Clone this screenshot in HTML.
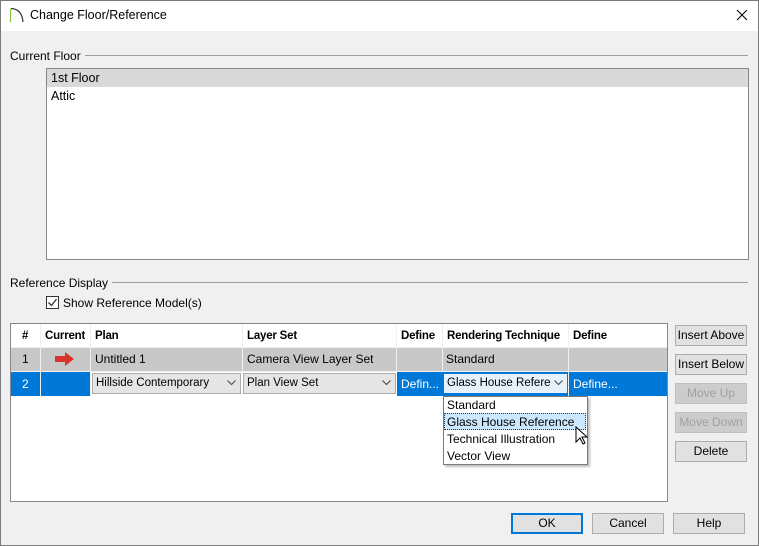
<!DOCTYPE html>
<html><head><style>
*{box-sizing:border-box;margin:0;padding:0}
body{width:759px;height:546px;position:relative;font-family:"Liberation Sans",sans-serif;font-size:12px;color:#000;background:#f0f0f0;overflow:hidden}
.a{position:absolute}
.win{left:0;top:0;width:759px;height:546px;border:1px solid #7a7a7a;background:#f0f0f0}
.title{left:1px;top:1px;width:757px;height:30px;background:#fff}
.btn{position:absolute;width:72px;height:21px;background:#e1e1e1;border:1px solid #adadad;text-align:center;line-height:19px;font-size:12px}
.dis{color:#a0a0a0;background:#cccccc;border-color:#bfbfbf}
.cell{position:absolute;height:24px;line-height:24px;padding-left:5px;white-space:nowrap;overflow:hidden}
.hd{font-weight:bold;font-size:11.5px;letter-spacing:-0.2px}
.vl{position:absolute;width:1px;background:#f0f0f0}
.combo{position:absolute;height:21px;background:#e5e5e5;border:1px solid #adadad;line-height:19px;padding-left:3px;font-size:11.5px;white-space:nowrap;overflow:hidden}
.combo span{display:block;overflow:hidden;white-space:nowrap}
.combo svg{position:absolute;right:4px;top:6px}
</style></head><body>
<div class="a win"></div>
<div class="a title"></div>
<svg class="a" style="left:9px;top:7px" width="16" height="16"><path d="M1.5 15V1.5" stroke="#8dc63f" stroke-width="1.2" fill="none"/><path d="M2 1.5Q13 2 14 15" stroke="#333" stroke-width="1.2" fill="none"/></svg>
<div class="a" style="left:30px;top:8px;font-size:12.5px">Change Floor/Reference</div>
<svg class="a" style="left:736px;top:9px" width="12" height="12"><path d="M1 1L11 11M11 1L1 11" stroke="#000" stroke-width="1.1"/></svg>

<div class="a" style="left:10px;top:49px">Current Floor</div>
<div class="a" style="left:85px;top:55px;width:663px;height:1px;background:#a0a0a0"></div>
<div class="a" style="left:46px;top:68px;width:703px;height:192px;background:#fff;border:1px solid #828790"></div>
<div class="a" style="left:47px;top:69px;width:701px;height:18px;background:#d9d9d9"></div>
<div class="a" style="left:51px;top:71px;font-size:12.5px">1st Floor</div>
<div class="a" style="left:51px;top:89px;font-size:12.5px">Attic</div>

<div class="a" style="left:10px;top:276px">Reference Display</div>
<div class="a" style="left:112px;top:282px;width:636px;height:1px;background:#a0a0a0"></div>
<div class="a" style="left:46px;top:296px;width:13px;height:13px;background:#fff;border:1px solid #333"></div>
<svg class="a" style="left:47px;top:297px" width="11" height="11"><path d="M1.5 5.5L4.5 8.5L9.5 2" stroke="#333" stroke-width="1.3" fill="none"/></svg>
<div class="a" style="left:63px;top:296px">Show Reference Model(s)</div>

<div class="a" style="left:10px;top:323px;width:658px;height:179px;background:#fff;border:1px solid #828790"></div>
<div class="cell hd" style="left:17px;top:324px">#</div>
<div class="cell hd" style="left:40px;top:324px">Current</div>
<div class="cell hd" style="left:90px;top:324px">Plan</div>
<div class="cell hd" style="left:242px;top:324px">Layer Set</div>
<div class="cell hd" style="left:396px;top:324px">Define</div>
<div class="cell hd" style="left:442px;top:324px;width:126px">Rendering Technique</div>
<div class="cell hd" style="left:568px;top:324px">Define</div>
<div class="a" style="left:11px;top:347px;width:656px;height:24px;background:#c8c8c8"></div>
<div class="cell" style="left:17px;top:347px">1</div>
<svg class="a" style="left:55px;top:352px" width="20" height="14"><path d="M0 4H10V0L19 7L10 14V10H0Z" fill="#d9342b"/></svg>
<div class="cell" style="left:90px;top:347px">Untitled 1</div>
<div class="cell" style="left:242px;top:347px">Camera View Layer Set</div>
<div class="cell" style="left:441px;top:347px">Standard</div>
<div class="a" style="left:11px;top:371px;width:656px;height:25px;background:#0078d7"></div>
<div class="cell" style="left:17px;top:372px;color:#fff">2</div>
<div class="a" style="left:91px;top:371px;width:306px;height:25px;background:#fff"></div>
<div class="combo" style="left:92px;top:373px;width:149px"><span>Hillside Contemporary</span><svg width="9" height="6"><path d="M0.5 0.5L4.5 4.5L8.5 0.5" stroke="#444" fill="none"/></svg></div>
<div class="combo" style="left:243px;top:373px;width:153px"><span>Plan View Set</span><svg width="9" height="6"><path d="M0.5 0.5L4.5 4.5L8.5 0.5" stroke="#444" fill="none"/></svg></div>
<div class="cell" style="left:396px;top:372px;color:#fff">Defin...</div>
<div class="combo" style="left:443px;top:373px;width:125px;background:#e5f1fb;border-color:#0078d7"><span style="width:103px">Glass House Reference</span><svg width="9" height="6"><path d="M0.5 0.5L4.5 4.5L8.5 0.5" stroke="#444" fill="none"/></svg></div>
<div class="cell" style="left:568px;top:372px;color:#fff">Define...</div>
<div class="vl" style="left:40px;top:324px;height:72px"></div>
<div class="vl" style="left:90px;top:324px;height:72px"></div>
<div class="vl" style="left:242px;top:324px;height:47px"></div>
<div class="vl" style="left:396px;top:324px;height:47px"></div>
<div class="vl" style="left:442px;top:324px;height:47px"></div>
<div class="vl" style="left:568px;top:324px;height:72px"></div>
<div class="a" style="left:11px;top:347px;width:656px;height:1px;background:#f0f0f0"></div>
<div class="a" style="left:11px;top:371px;width:656px;height:1px;background:#f0f0f0"></div>
<div class="a" style="left:443px;top:396px;width:145px;height:69px;background:#fff;border:1px solid #7a7a7a;box-shadow:2px 2px 2px rgba(0,0,0,.25)"></div>
<div class="a" style="left:444px;top:413px;width:142px;height:17px;background:#cce8ff;border:1px dotted #333"></div>
<div class="a" style="left:447px;top:398px">Standard</div>
<div class="a" style="left:447px;top:415px">Glass House Reference</div>
<div class="a" style="left:447px;top:432px">Technical Illustration</div>
<div class="a" style="left:447px;top:449px">Vector View</div>
<svg class="a" style="left:575px;top:426px" width="14" height="20"><path d="M1 1V16L5 12L8 18L10 17L7 11H12Z" fill="#fff" stroke="#000" stroke-width="1"/></svg>

<div class="btn" style="left:675px;top:325px">Insert Above</div>
<div class="btn" style="left:675px;top:354px">Insert Below</div>
<div class="btn dis" style="left:675px;top:383px">Move Up</div>
<div class="btn dis" style="left:675px;top:412px">Move Down</div>
<div class="btn" style="left:675px;top:441px">Delete</div>

<div class="btn" style="left:511px;top:513px;border:2px solid #0078d7;line-height:17px">OK</div>
<div class="btn" style="left:592px;top:513px">Cancel</div>
<div class="btn" style="left:673px;top:513px">Help</div>
</body></html>
